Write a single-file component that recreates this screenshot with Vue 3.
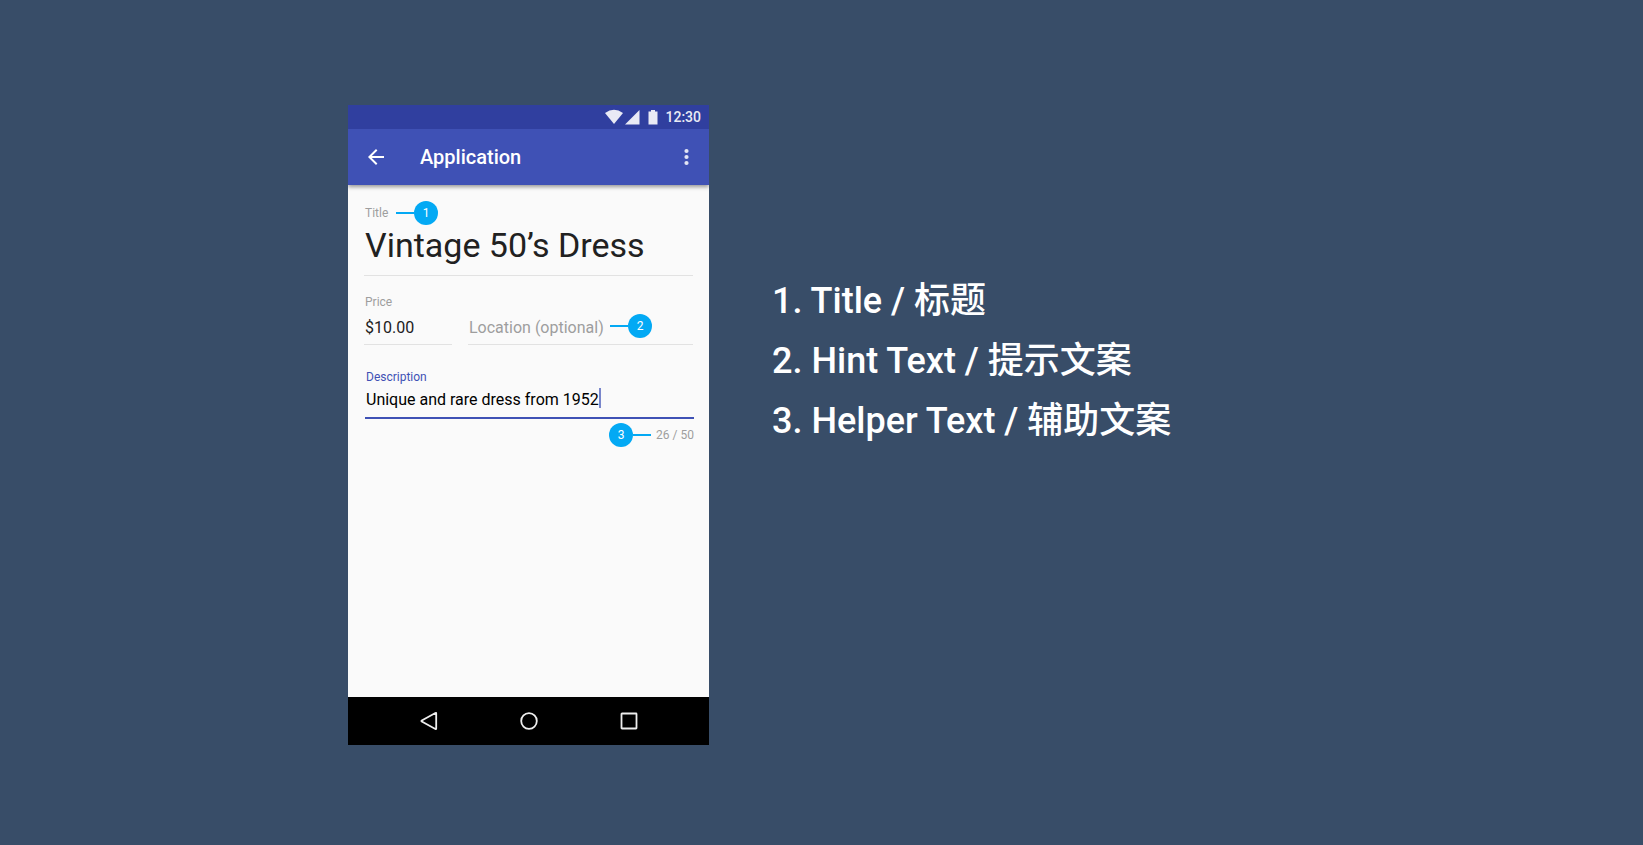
<script setup>
import { ref } from 'vue'

const title = ref('Vintage 50’s Dress')
const price = ref('$10.00')
const location = ref('')
const description = ref('Unique and rare dress from 1952')

const legend = ['1. Title / 标题', '2. Hint Text / 提示文案', '3. Helper Text / 辅助文案']
</script>

<template>
  <main class="scene">
    <section class="phone">
      <div class="status">
        <svg class="status-icons" width="54" height="16" viewBox="0 0 54 16" aria-hidden="true">
          <path d="M0 4Q9-2.400 18 4L9 15z" />
          <path d="M20 15.500H34.500V1z" />
          <path d="M46 1h4v1.500h2.500v13h-9v-13H46z" />
        </svg>
        <span>12:30</span>
      </div>
      <header class="appbar">
        <button class="icon-button" type="button" aria-label="Back">
          <svg width="24" height="24" viewBox="0 0 24 24">
            <path fill="#fff" d="M20 11H7.830l5.590-5.590L12 4l-8 8 8 8 1.410-1.410L7.830 13H20v-2z" />
          </svg>
        </button>
        <h1>Application</h1>
        <button class="icon-button" type="button" aria-label="More options">
          <svg width="24" height="24" viewBox="0 0 24 24" fill="#e3e5f4">
            <circle cx="12.500" cy="6" r="2.100" />
            <circle cx="12.500" cy="12" r="2.100" />
            <circle cx="12.500" cy="18" r="2.100" />
          </svg>
        </button>
      </header>

      <form class="form" @submit.prevent>
        <div class="field field-title">
          <label for="title">Title</label>
          <input id="title" v-model="title" type="text" />
          <div class="callout callout-title"><i></i><b>1</b></div>
        </div>
        <div class="row">
          <div class="field field-price">
            <label for="price">Price</label>
            <input id="price" v-model="price" type="text" />
          </div>
          <div class="field field-location">
            <input id="location" v-model="location" type="text" placeholder="Location (optional)" aria-label="Location (optional)" />
            <div class="callout callout-hint"><i></i><b>2</b></div>
          </div>
        </div>
        <div class="focused">
          <div class="field field-description">
            <label for="description">Description</label>
            <input id="description" v-model="description" type="text" />
            <span class="caret"></span>
          </div>
          <div class="helper">
            <div class="callout"><b>3</b><i></i></div>
            <span>26 / 50</span>
          </div>
        </div>
      </form>

      <nav class="navbar">
        <button type="button" aria-label="Back">
          <svg width="20" height="20" viewBox="0 0 20 20">
            <path d="M17.200 2.400v15.200Q17.200 18.400 16.400 18L2.800 10.600Q2 10 2.800 9.400L16.400 2Q17.200 1.600 17.200 2.400z" />
          </svg>
        </button>
        <button type="button" aria-label="Home">
          <svg width="20" height="20" viewBox="0 0 20 20"><circle cx="10" cy="10" r="7.800" /></svg>
        </button>
        <button type="button" aria-label="Recent apps">
          <svg width="20" height="20" viewBox="0 0 20 20"><rect x="2.500" y="2.500" width="15" height="15" rx="0.500" /></svg>
        </button>
      </nav>
    </section>

    <section class="legend">
      <p v-for="item in legend" :key="item">{{ item }}</p>
    </section>
  </main>
</template>

<style>
body {
  margin: 0;
  background: #384d68;
}
</style>

<style scoped>
.scene {
  box-sizing: border-box;
  min-height: 100vh;
  display: flex;
  align-items: flex-start;
  gap: 63px;
  padding: 105px 24px 24px 348px;
  background: #384d68;
  font-family: Roboto, "Noto Sans CJK SC", sans-serif;
}
.phone {
  flex: 0 0 361px;
  min-height: 640px;
  display: flex;
  flex-direction: column;
  background: #fafafa;
}
.status {
  display: flex;
  align-items: center;
  justify-content: flex-end;
  gap: 6px;
  height: 24px;
  padding-right: 8px;
  background: #303f9f;
  color: #e9eaf5;
  font-size: 14px;
  font-weight: 500;
}
.status-icons {
  fill: #e9eaf5;
}
.appbar {
  display: flex;
  align-items: center;
  height: 56px;
  padding: 0 11px 0 16px;
  background: #3f51b5;
  box-shadow: 0 2px 4px rgba(0, 0, 0, 0.4);
  clip-path: inset(0 0 -8px 0);
}
.appbar h1 {
  flex: 1;
  margin: 0 0 0 32px;
  color: #fff;
  font-size: 20px;
  font-weight: 500;
  line-height: 24px;
}
button {
  padding: 0;
  border: 0;
  background: none;
}
.icon-button,
.icon-button svg,
.navbar svg {
  display: block;
}
.form {
  flex: 1;
  padding: 20px 16px;
}
.field {
  position: relative;
  border-bottom: 1px solid #e2e2e2;
}
label,
.helper {
  color: #9e9e9e;
  font-size: 12px;
  line-height: 16px;
}
label {
  display: block;
  padding-left: 1px;
}
input {
  display: block;
  box-sizing: border-box;
  width: 100%;
  height: 24px;
  margin: 0;
  padding: 0 0 0 1px;
  border: 0;
  outline: 0;
  background: transparent;
  color: #212121;
  font-family: inherit;
  font-size: 16px;
  line-height: 24px;
}
input::placeholder {
  color: #9e9e9e;
  opacity: 1;
}
.field-title {
  padding-bottom: 10px;
}
.field-title input {
  height: 40px;
  margin-top: 4px;
  font-size: 34px;
  line-height: 40px;
}
.row {
  display: flex;
  align-items: flex-end;
  gap: 16px;
  margin-top: 18px;
}
.field-price {
  flex: 0 0 88px;
}
.field-location {
  flex: 1;
}
.row .field {
  padding-bottom: 4px;
}
.field-price input {
  margin-top: 6px;
}
.focused {
  margin: 24px -1px 0 1px;
}
.field-description {
  padding-bottom: 5px;
  border-bottom: 2px solid #3f51b5;
}
.field-description label {
  color: #3f51b5;
}
.field-description input {
  margin-top: 3px;
  color: #000;
}
.caret {
  position: absolute;
  left: 234px;
  bottom: 9px;
  width: 2px;
  height: 20px;
  background: #7986cb;
}
.helper {
  display: flex;
  align-items: center;
  justify-content: flex-end;
  gap: 5px;
  margin-top: 4px;
}
.callout {
  display: flex;
  align-items: center;
}
.callout b {
  width: 24px;
  border-radius: 50%;
  background: #03a9f4;
  color: #fff;
  font-size: 12px;
  font-weight: 400;
  line-height: 24px;
  text-align: center;
}
.callout i {
  width: 18px;
  height: 2px;
  background: #03a9f4;
}
.callout-title,
.callout-hint {
  position: absolute;
}
.callout-title {
  top: -4px;
  left: 32px;
}
.callout-hint {
  bottom: 6px;
  left: 142px;
}
.navbar {
  display: flex;
  align-items: center;
  justify-content: center;
  gap: 80px;
  height: 48px;
  background: #000;
}
.navbar svg {
  fill: none;
  stroke: #eee;
  stroke-width: 1.800;
}
.legend {
  margin-top: 166px;
  color: #fff;
  font-size: 36px;
  font-weight: 500;
  line-height: 60px;
}
.legend p {
  margin: 0;
}
</style>
